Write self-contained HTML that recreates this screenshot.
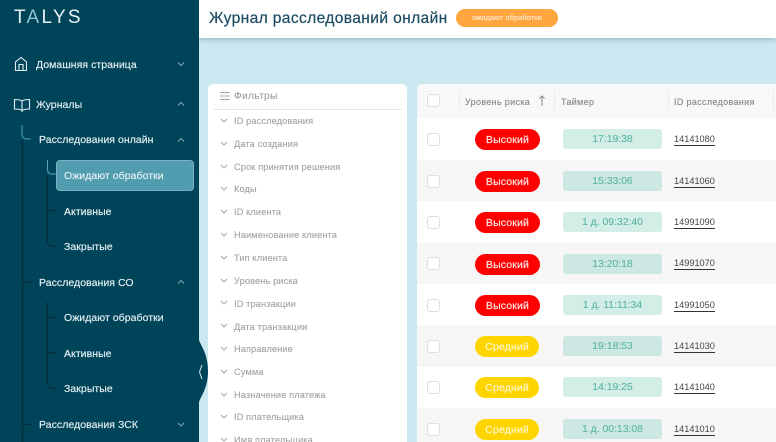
<!DOCTYPE html>
<html lang="ru"><head><meta charset="utf-8"><title>Журнал расследований онлайн</title>
<style>
html,body{margin:0;padding:0;width:776px;height:442px;overflow:hidden}
body{position:relative;background:#cbe7ef;font-family:"Liberation Sans","Noto Sans CJK JP",sans-serif}
div,span,svg{position:absolute}
.t{white-space:nowrap;line-height:14px;height:14px}
#side{left:0;top:0;width:199px;height:442px;background:#00445a}
.m{color:#e4eff2;font-size:10.5px;letter-spacing:.05px;-webkit-text-stroke:.15px #e4eff2}
.f{color:#a3a3a3;font-size:9.2px;left:234px;letter-spacing:.14px;-webkit-text-stroke:.12px #a3a3a3}
.c{left:220px;width:8px;height:5px}
.h{color:#858585;font-size:9px;top:95px;letter-spacing:.33px;-webkit-text-stroke:.1px #858585}
.s{width:1px;height:17px;top:92px;background:#e8eaec}
.r{left:417px;width:359px}
.g{background:#f6f6f6}.w{background:#fff}
.b{left:427px;width:11px;height:11px;border:1px solid #dcdfe3;border-radius:3px;background:#fff}
.p{left:475px;height:21px;border-radius:11px;color:#ffe9e9;font-size:10.5px;line-height:22px;text-align:center;letter-spacing:.15px;-webkit-text-stroke:.15px currentColor}
.hi{width:65px;background:#ff0000}.mi{width:64px;background:#ffd500;color:#fff6cf}
.ti{left:563px;width:99px;height:20px;border-radius:3px;color:#5cb6a4;font-size:10.5px;line-height:21px;text-align:center;letter-spacing:-.05px;-webkit-text-stroke:.12px #5cb6a4}
.tw{background:#d3ede7}.tg{background:#cde8e2}
.id{left:674px;color:#444;font-size:9.2px;line-height:11px;height:11px;border-bottom:1px solid #333;white-space:nowrap}
</style></head><body>

<div style="left:199px;top:0;width:577px;height:38px;background:#fff;box-shadow:0 1px 5px rgba(60,110,130,.45)"></div>
<div class="t" style="left:209px;top:9px;height:20px;line-height:20px;font-size:15.6px;color:#1d4c62;letter-spacing:.36px;-webkit-text-stroke:.2px #1d4c62">Журнал расследований онлайн</div>
<div style="left:456px;top:9px;width:102px;height:18px;border-radius:9px;background:#ffa63e;color:#ffeeda;font-size:7.6px;line-height:18px;text-align:center;-webkit-text-stroke:.1px #ffeeda">ожидают обработки</div>

<div id="side"></div>
<div class="t" style="left:14px;top:7px;height:22px;line-height:22px;font-size:19px;letter-spacing:2.3px;color:#e6f2f5">T<span style="position:static;color:#8fc4d1">A</span>LYS</div>

<svg style="left:0;top:0" width="210" height="442" fill="none">
<path d="M15.5 70.5V62L21 57.5L26.5 62V70.5ZM19 70.5V64.5H23V70.5" stroke="#dfeef2" stroke-width="1.1"/>
<path d="M22 101C20 99.5 17 99.5 14.500 99.500V109C17 109 20 109 22 110.500C24 109 27 109 29.500 109V99.500C27 99.500 24 99.500 22 101ZM22 101V112" stroke="#dfeef2" stroke-width="1.100"/>
<path d="M22 125V134Q22 139 27 139H30.500" stroke="#4b9fb2" stroke-width="1"/>
<path d="M22.500 140V442M22.500 278Q22.500 282.500 27 282.500H30.500M22.500 424.500H30.500" stroke="#082b3a" stroke-width="1.200"/>
<path d="M47.500 160V169Q47.500 174 52 174H56.500" stroke="#5ba7b8" stroke-width="1"/>
<path d="M47.500 175V241Q47.500 246 52 246H56.500M47.500 210.500H56.500" stroke="#082b3a" stroke-width="1.200"/>
<path d="M47.500 302V383Q47.500 388 52 388H56.500M47.500 317.500H56.500M47.500 353H56.500" stroke="#082b3a" stroke-width="1.200"/>
<path d="M178 62.500L181 65.500L184 62.500M178 105.500L181 102.500L184 105.500M178 141.500L181 138.500L184 141.500M178 283.500L181 280.500L184 283.500M178 423L181 426L184 423" stroke="#7fa9b6" stroke-width="1"/>
<path d="M199 340C201 346 208 354 208 371C208 388 201 396 199 402Z" fill="#00445a"/>
<path d="M202 365L199.500 372L202 379" stroke="#c9dfe5" stroke-width="1.100"/>
</svg>

<div class="t m" style="left:36px;top:58px">Домашняя страница</div>
<div class="t m" style="left:36px;top:98px">Журналы</div>
<div class="t m" style="left:39px;top:133px">Расследования онлайн</div>
<div style="left:56px;top:160px;width:136px;height:29px;background:#519caf;border:1px solid #79b4c3;border-radius:4px"></div>
<div class="t m" style="left:64px;top:169px">Ожидают обработки</div>
<div class="t m" style="left:64px;top:205px">Активные</div>
<div class="t m" style="left:64px;top:240px">Закрытые</div>
<div class="t m" style="left:39px;top:276px">Расследования СО</div>
<div class="t m" style="left:64px;top:311px">Ожидают обработки</div>
<div class="t m" style="left:64px;top:347px">Активные</div>
<div class="t m" style="left:64px;top:382px">Закрытые</div>
<div class="t m" style="left:39px;top:418px">Расследования ЗСК</div>

<div style="left:208px;top:84px;width:199px;height:358px;background:#fff;border-radius:5px 5px 0 0"></div>
<svg style="left:220px;top:91px" width="10" height="10" fill="none" stroke="#a0a0a0" stroke-width=".9"><path d="M0 1.500H5M7 1.500H10M0 5H2M4 5H10M0 8.500H5M7 8.500H10M6 0V3M3 3.500V6.500M6 7V10"/></svg>
<div class="t" style="left:234px;top:90px;font-size:10.2px;color:#a0a0a0;letter-spacing:.3px;-webkit-text-stroke:.12px #a0a0a0">Фильтры</div>
<div style="left:214px;top:109px;width:188px;height:1px;background:#e3e5e7"></div>

<div class="t f" style="top:114px">ID расследования</div>
<div class="t f" style="top:137px">Дата создания</div>
<div class="t f" style="top:160px">Срок принятия решения</div>
<div class="t f" style="top:182px">Коды</div>
<div class="t f" style="top:205px">ID клиента</div>
<div class="t f" style="top:228px">Наименование клиента</div>
<div class="t f" style="top:251px">Тип клиента</div>
<div class="t f" style="top:274px">Уровень риска</div>
<div class="t f" style="top:297px">ID транзакции</div>
<div class="t f" style="top:320px">Дата транзакции</div>
<div class="t f" style="top:342px">Направление</div>
<div class="t f" style="top:365px">Сумма</div>
<div class="t f" style="top:388px">Назначение платежа</div>
<div class="t f" style="top:410px">ID плательщика</div>
<div class="t f" style="top:433px">Имя плательщика</div>
<svg style="left:220px;top:110px" width="10" height="332" fill="none" stroke="#a8a8a8" stroke-width="1"><path d="M1 9L4 12L7 9M1 32L4 35L7 32M1 55L4 58L7 55M1 77L4 80L7 77M1 100L4 103L7 100M1 123L4 126L7 123M1 146L4 149L7 146M1 169L4 172L7 169M1 191L4 194L7 191M1 214L4 217L7 214M1 237L4 240L7 237M1 260L4 263L7 260M1 283L4 286L7 283M1 305L4 308L7 305M1 328L4 331L7 328"/></svg>

<div style="left:417px;top:84px;width:359px;height:34px;background:#f7f8f9;border-radius:5px 0 0 0"></div>
<div class="b" style="top:94px"></div>
<div class="s" style="left:459px"></div><div class="s" style="left:554px"></div><div class="s" style="left:668px"></div><div class="s" style="left:773px"></div>
<div class="t h" style="left:465px">Уровень риска</div>
<svg style="left:538px;top:95px" width="8" height="12" fill="none" stroke="#8a8a8a" stroke-width="1"><path d="M4 11V1M1.500 3.500L4 1L6.500 3.500"/></svg>
<div class="t h" style="left:561px">Таймер</div>
<div class="t h" style="left:674px">ID расследования</div>

<div class="r w" style="top:118px;height:42px"></div>
<div class="r g" style="top:160px;height:41px"></div>
<div class="r w" style="top:201px;height:42px"></div>
<div class="r g" style="top:243px;height:41px"></div>
<div class="r w" style="top:284px;height:41px"></div>
<div class="r g" style="top:325px;height:42px"></div>
<div class="r w" style="top:367px;height:41px"></div>
<div class="r g" style="top:408px;height:34px"></div>

<div class="b" style="top:133px"></div><div class="p hi" style="top:129px">Высокий</div><div class="ti tw" style="top:129px">17:19:38</div><div class="id" style="top:134px">14141080</div>
<div class="b" style="top:175px"></div><div class="p hi" style="top:171px">Высокий</div><div class="ti tg" style="top:171px">15:33:06</div><div class="id" style="top:176px">14141060</div>
<div class="b" style="top:216px"></div><div class="p hi" style="top:212px">Высокий</div><div class="ti tw" style="top:212px">1 д. 09:32:40</div><div class="id" style="top:217px">14991090</div>
<div class="b" style="top:257px"></div><div class="p hi" style="top:254px">Высокий</div><div class="ti tg" style="top:254px">13:20:18</div><div class="id" style="top:258px">14991070</div>
<div class="b" style="top:299px"></div><div class="p hi" style="top:295px">Высокий</div><div class="ti tw" style="top:295px">1 д. 11:11:34</div><div class="id" style="top:300px">14991050</div>
<div class="b" style="top:340px"></div><div class="p mi" style="top:336px">Средний</div><div class="ti tg" style="top:336px">19:18:53</div><div class="id" style="top:341px">14141030</div>
<div class="b" style="top:381px"></div><div class="p mi" style="top:377px">Средний</div><div class="ti tw" style="top:377px">14:19:25</div><div class="id" style="top:382px">14141040</div>
<div class="b" style="top:423px"></div><div class="p mi" style="top:419px">Средний</div><div class="ti tg" style="top:419px">1 д. 00:13:08</div><div class="id" style="top:424px">14141010</div>
</body></html>
